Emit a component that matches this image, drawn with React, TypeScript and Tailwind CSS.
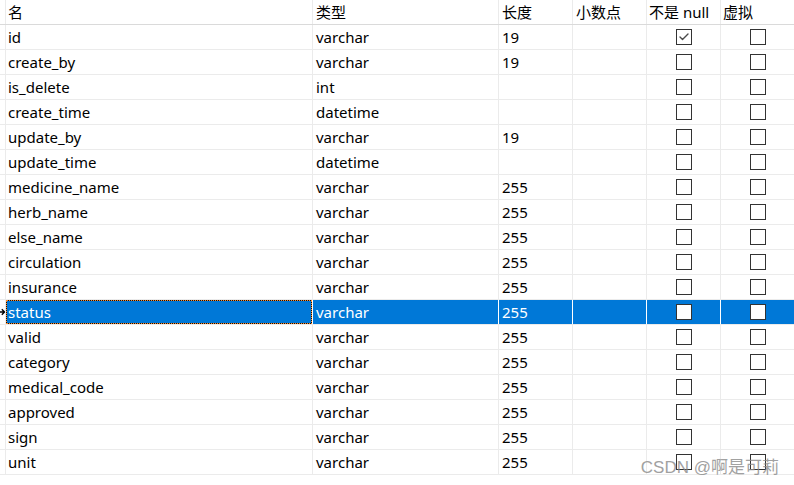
import { Check } from 'lucide-react';

interface Field {
    name: string;
    type: string;
    length: string;
    notNull?: boolean;
}

const fields: Field[] = [
    { name: 'id', type: 'varchar', length: '19', notNull: true },
    { name: 'create_by', type: 'varchar', length: '19' },
    { name: 'is_delete', type: 'int', length: '' },
    { name: 'create_time', type: 'datetime', length: '' },
    { name: 'update_by', type: 'varchar', length: '19' },
    { name: 'update_time', type: 'datetime', length: '' },
    { name: 'medicine_name', type: 'varchar', length: '255' },
    { name: 'herb_name', type: 'varchar', length: '255' },
    { name: 'else_name', type: 'varchar', length: '255' },
    { name: 'circulation', type: 'varchar', length: '255' },
    { name: 'insurance', type: 'varchar', length: '255' },
    { name: 'status', type: 'varchar', length: '255' },
    { name: 'valid', type: 'varchar', length: '255' },
    { name: 'category', type: 'varchar', length: '255' },
    { name: 'medical_code', type: 'varchar', length: '255' },
    { name: 'approved', type: 'varchar', length: '255' },
    { name: 'sign', type: 'varchar', length: '255' },
    { name: 'unit', type: 'varchar', length: '255' },
];

const SELECTED = 'status';

function CheckBox({ checked }: { checked?: boolean }) {
    return (
        <div className="flex h-4 w-4 items-center justify-center border border-[#333] bg-white">
            {checked && <Check className="h-3 w-3 text-[#4a4a4a]" strokeWidth={2.75} />}
        </div>
    );
}

function Row({ field }: { field: Field }) {
    const sel = field.name === SELECTED;
    const line = sel ? 'border-white' : 'border-[#ebebeb]';
    return (
        <div
            className={
                'flex h-[25px] border-b border-[#ebebeb] ' +
                (sel ? 'bg-[#0078d7] text-white' : 'text-black')
            }
        >
            {/* row indicator */}
            <div className="flex w-[6px] items-center border-r border-[#ebebeb] bg-white">
                {sel && (
                    <svg width="5" height="8" viewBox="0 0 5 8">
                        <path d="M0 4H4.5M1.8 1.2L4.5 4L1.8 6.8" stroke="#000" strokeWidth="1.3" fill="none" />
                    </svg>
                )}
            </div>
            <div className={'relative flex w-[307px] items-center border-r px-[2px] ' + line}>
                {sel && (
                    <>
                        <div className="absolute inset-0 border border-[#111]" />
                        <div className="absolute inset-0 border border-dotted border-[#ff8a2a]" />
                    </>
                )}
                <span className="relative">{field.name}</span>
            </div>
            <div className={'flex w-[186px] items-center border-r px-[3px] ' + line}>{field.type}</div>
            <div className={'flex w-[74px] items-center border-r px-[3px] ' + line}>{field.length}</div>
            <div className={'flex w-[74px] items-center border-r px-[3px] ' + line} />
            <div className={'flex w-[74px] items-center justify-center border-r ' + line}>
                <CheckBox checked={field.notNull} />
            </div>
            <div className="flex w-[73px] items-center justify-center">
                <CheckBox />
            </div>
        </div>
    );
}

export default function App() {
    return (
        <div
            className="relative h-[485px] w-[794px] overflow-hidden bg-white text-[15px] leading-none"
            style={{ fontFamily: '"Noto Sans", "Noto Sans CJK SC", sans-serif' }}
        >
            {/* Header */}
            <div className="flex h-[25px] border-b border-[#dadada] text-black">
                <div className="w-[6px] border-r border-[#ebebeb]" />
                <div className="flex w-[307px] items-center border-r border-[#ebebeb] px-[2px]">名</div>
                <div className="flex w-[186px] items-center border-r border-[#ebebeb] px-[3px]">类型</div>
                <div className="flex w-[74px] items-center border-r border-[#ebebeb] px-[3px]">长度</div>
                <div className="flex w-[74px] items-center border-r border-[#ebebeb] px-[3px]">小数点</div>
                <div className="flex w-[74px] items-center border-r border-[#ebebeb] px-[2px]">不是 null</div>
                <div className="flex w-[73px] items-center px-[2px]">虚拟</div>
            </div>

            {fields.map((f) => (
                <Row key={f.name} field={f} />
            ))}

            {/* watermark */}
            <div
                className="absolute bottom-[9px] right-[15px] text-[17px] text-[#8a8a8a] opacity-80"
                style={{ fontFamily: '"Liberation Sans", "Noto Sans CJK SC", sans-serif' }}
            >
                CSDN @啊是可莉
            </div>
        </div>
    );
}
